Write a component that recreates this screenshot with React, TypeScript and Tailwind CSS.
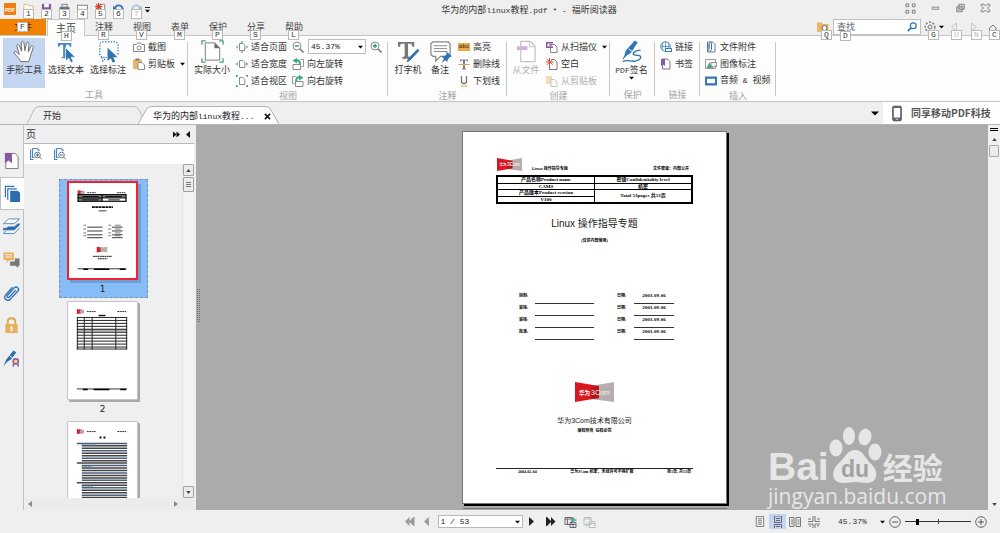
import type { ReactNode } from 'react';

/* ---------- small shared pieces ---------- */

interface IconProps {
  box?: string;
  className?: string;
  children: ReactNode;
}

function Icon({ box = '0 0 12 12', className = 'w-3 h-3', children }: IconProps) {
  return (
    <svg viewBox={box} className={`${className} shrink-0`} fill="none" aria-hidden="true">
      {children}
    </svg>
  );
}

function Caret({ className = 'text-black' }: { className?: string }) {
  return (
    <Icon box="0 0 6 4" className={`w-[5px] h-[4px] ${className}`}>
      <path d="M0 0.500h6L3 3.800z" fill="currentColor" />
    </Icon>
  );
}

function Tip({ label, className, dim }: { label: string; className: string; dim?: boolean }) {
  return (
    <kbd
      className={`absolute z-10 w-[11px] h-[10px] flex items-center justify-center bg-white border border-[#b9b9b9] font-['Liberation_Mono',monospace] text-[8px] leading-none ${dim ? 'text-[#b8b8b8]' : 'text-[#333]'} ${className}`}
    >
      {label}
    </kbd>
  );
}

const latin = "font-['Liberation_Mono',monospace] text-[8px]";

/* ---------- icons ---------- */

const pageShape = 'M2.500 1h5l2.500 2.500V11h-7.500z';

const FitIcon = ({ kind }: { kind: string }) => (
  <Icon>
    <path d="M3.500 2.500h3.500l1.800 1.800v5.200H3.500z" fill="#fff" stroke="#8a8a8a" />
    {kind === 'page' && <path d="M6 0l1.800 1.600H4.200zM6 12l1.800-1.600H4.200zM0 6l1.600-1.800v3.600zM12 6l-1.600-1.800v3.600z" fill="#3da67e" />}
    {kind === 'width' && <path d="M0 6l1.800-2v4zM12 6l-1.800-2v4z" fill="#3da67e" />}
    {kind === 'view' && <path d="M0.500 2V0.500H2M10 0.500h1.500V2M11.500 10v1.500H10M2 11.500H0.500V10" stroke="#3da67e" strokeWidth="1.400" />}
  </Icon>
);

const ZoomIcon = ({ plus }: { plus?: boolean }) => (
  <Icon>
    <circle cx="5" cy="5" r="4" fill="#fff" stroke="#8c8c8c" />
    <path d="M8 8l3.500 3.500" stroke="#7b7b7b" strokeWidth="1.600" />
    <path d={plus ? 'M2.800 5h4.400M5 2.800v4.400' : 'M2.800 5h4.400'} stroke="#2f9c72" strokeWidth="1.400" />
  </Icon>
);

const RotateIcon = ({ right }: { right?: boolean }) => (
  <Icon>
    <g transform={right ? 'matrix(-1 0 0 1 12 0)' : undefined}>
      <path d="M8.500 1.500h3v7h-2" stroke="#9a9a9a" />
      <path d="M1 6.500h7.500v5H1z" fill="#fff" stroke="#8a8a8a" />
      <path d="M8 6.500C8 3 6.500 2 4 2.300" stroke="#3da67e" strokeWidth="2" />
      <path d="M5 0v5.500L0.500 2.500z" fill="#3da67e" />
    </g>
  </Icon>
);

const Cursor = () => <path d="M11 8v14l3.300-3 2.200 4.700 2.600-1.200-2.200-4.500h4.600z" fill="#2e74b5" />;

const HandIcon = () => (
  <Icon box="0 0 24 24" className="w-[23px] h-[23px]">
    <path
      d="M8 22.500c-1-3-4.500-6-6.700-8.800-.7-1.500 1-2.300 2.300-1.200l3 2.700L4 6.500c-.4-1.800 1.800-2.400 2.500-.8l2.500 6L8.600 3c0-1.900 2.500-2 2.800-.2l1 8.400 1.700-8c.5-1.700 2.700-1.300 2.600.5l-.8 8.600 2.800-5.500c.9-1.500 2.800-.6 2.400 1l-3 9c-.6 2.600-1.100 4-1.600 5.700z"
      fill="#fff"
      stroke="#6c6c6c"
    />
  </Icon>
);

const SelectTextIcon = () => (
  <Icon box="0 0 24 24" className="w-[23px] h-[23px]">
    <path d="M3 3h14v4h-1.500L14.500 5h-3v12.500l1.800.8V19H6.700v-.7l1.800-.8V5h-3l-1 2H3z" fill="#4a89c8" />
    <path d="M11 8v14l3.300-3 2.200 4.700 2.600-1.200-2.200-4.500h4.600z" fill="#2e74b5" stroke="#fff" strokeWidth="0.800" />
  </Icon>
);

const SelectMarkIcon = () => (
  <Icon box="0 0 24 24" className="w-[23px] h-[23px]">
    <path d="M8 18H5l-2-2V4l2-2h15l2 2v12M5 18l1 4 4-4" stroke="#2e74b5" strokeDasharray="1.500 1.500" strokeWidth="1.200" />
    <Cursor />
  </Icon>
);

const ActualSizeIcon = () => (
  <Icon box="0 0 24 24" className="w-[23px] h-[23px]">
    <path d="M1 5V1h4M19 1h4v4M23 19v4h-4M5 23H1v-4" stroke="#3da67e" strokeWidth="1.300" />
    <path d="M4.500 3h10l5 5v13h-15z" fill="#fff" stroke="#7a7a7a" />
    <path d="M14 3v5.500h5.500z" fill="#6a6a6a" />
  </Icon>
);

const TypewriterIcon = () => (
  <Icon box="0 0 24 24" className="w-[23px] h-[23px]">
    <path d="M1 2h17v5h-2l-1-3h-3.500v13l2.500 1v1.500H5.500V18L8 17V4H4L3 7H1z" fill="#777" />
    <path d="M23 11l-9.500 10-2.800 1.800 1.200-3.200L21.500 9.700z" fill="#2e74b5" stroke="#2e74b5" />
  </Icon>
);

const NoteIcon = () => (
  <Icon box="0 0 24 24" className="w-[23px] h-[23px]">
    <path d="M4 2h16l2 2v11l-2 2h-8l-5 5v-5H4l-2-2V4z" fill="#fff" stroke="#858585" strokeWidth="1.300" />
    <path d="M5 6h14M5 9h14M5 12h14" stroke="#858585" />
    <path d="M18 12l6 5-2.500 1-2 2.500-.3 2.500-2.200-2-4 3 2.500-4.500-2-2 2.500-.6 2.300-2z" fill="#2e74b5" />
  </Icon>
);

const FromFileIcon = () => (
  <Icon box="0 0 24 24" className="w-[23px] h-[23px]">
    <path d="M6 1.500h10l5 5v16H6z" fill="#fff" stroke="#c4c4c4" strokeWidth="1.300" />
    <path d="M15 1.500v5.500h6" stroke="#c4c4c4" />
    <path d="M2 6.500h11v4H2z" fill="#cdb4dc" />
  </Icon>
);

const SignIcon = () => (
  <Icon box="0 0 24 24" className="w-[23px] h-[23px]">
    <path d="M15.500 0.500l3 1.800-7 11-4.500 3-5 5.200 3-6.500 1-4z" fill="#2e74b5" />
    <path d="M9 9.500l4 2.500" stroke="#fff" />
    <path d="M3 22.500c5-2.500 8 .5 13-.5 7-1.500 7-6 2.500-6-4 0-6-.5-4-3 1.500-1.800 4-2.500 7-2.500" stroke="#2e74b5" strokeWidth="1.400" />
  </Icon>
);

/* ---------- ribbon ---------- */

function BigButton({ icon, label, active, dim, caret, width = 'w-[42px]' }: {
  icon: ReactNode; label: ReactNode; active?: boolean; dim?: boolean; caret?: boolean; width?: string;
}) {
  return (
    <button
      className={`${width} h-[50px] shrink-0 pt-[2px] flex flex-col items-center ${active ? 'bg-[#c3d5f1]' : ''} ${dim ? 'text-[#b0b0b0]' : 'text-[#333]'}`}
    >
      {icon}
      <span className="mt-px h-3 leading-3 whitespace-nowrap">{label}</span>
      {caret && <Caret />}
    </button>
  );
}

function SmallButton({ icon, label, dim, caret }: { icon: ReactNode; label: ReactNode; dim?: boolean; caret?: boolean }) {
  return (
    <button className={`h-[17px] flex items-center gap-[3px] whitespace-nowrap ${dim ? 'text-[#b0b0b0]' : 'text-[#333]'}`}>
      {icon}
      <span>{label}</span>
      {caret && <span className="pl-[2px]"><Caret /></span>}
    </button>
  );
}

function Group({ title, width, children }: { title: string; width: string; children: ReactNode }) {
  return (
    <section className={`${width} shrink-0 relative flex flex-col pt-[2px] after:absolute after:right-0 after:top-[6px] after:h-[54px] after:w-px after:bg-[#c6c6c6]`}>
      <div className="flex h-[51px]">{children}</div>
      <h3 className="text-center text-[#a2a2a2] leading-[13px]">{title}</h3>
    </section>
  );
}

function Ribbon() {
  return (
    <div className="h-[66px] shrink-0 flex bg-[#fdfdfd] border-b border-[#c4c4c4]">
      <Group title="工具" width="w-[188px]">
        <div className="flex pl-[3px]">
          <BigButton icon={<HandIcon />} label="手形工具" active />
          <BigButton icon={<SelectTextIcon />} label="选择文本" />
          <BigButton icon={<SelectMarkIcon />} label="选择标注" />
        </div>
        <div className="pl-1">
          <SmallButton
            icon={
              <Icon>
                <path d="M0.500 3.500h3l1-1.500h3l1 1.500h3v7H0.500z" stroke="#868686" fill="#fff" />
                <circle cx="6" cy="6.800" r="2" stroke="#868686" />
              </Icon>
            }
            label="截图"
          />
          <SmallButton
            icon={
              <Icon>
                <path d="M0 1.500h9V11H0z" fill="#eab665" />
                <path d="M2.500 0.500h4v2h-4z" fill="#7a7a7a" />
                <path d="M5 4.500h4l2.500 2.500v4.500H5z" fill="#fff" stroke="#8a8a8a" />
              </Icon>
            }
            label="剪贴板"
            caret
          />
        </div>
      </Group>

      <Group title="视图" width="w-[200px]">
        <div className="flex pl-[3px]">
          <BigButton icon={<ActualSizeIcon />} label="实际大小" />
        </div>
        <div className="pl-[3px]">
          <SmallButton icon={<FitIcon kind="page" />} label="适合页面" />
          <SmallButton icon={<FitIcon kind="width" />} label="适合宽度" />
          <SmallButton icon={<FitIcon kind="view" />} label="适合视区" />
        </div>
        <div className="pl-[5px]">
          <div className="h-[17px] flex items-center gap-1">
            <button aria-label="缩小"><ZoomIcon /></button>
            <label className="relative flex items-center">
              <select aria-label="缩放" className={`appearance-none w-[58px] h-[15px] pl-[2px] bg-white border border-[#bcbcbc] text-[#222] ${latin}`}>
                <option>45.37%</option>
              </select>
              <span className="absolute right-[3px] pointer-events-none"><Caret /></span>
            </label>
            <button aria-label="放大"><ZoomIcon plus /></button>
          </div>
          <SmallButton icon={<RotateIcon />} label="向左旋转" />
          <SmallButton icon={<RotateIcon right />} label="向右旋转" />
        </div>
      </Group>

      <Group title="注释" width="w-[119px]">
        <div className="flex pl-1">
          <BigButton icon={<TypewriterIcon />} label="打字机" width="w-[32px]" />
          <BigButton icon={<NoteIcon />} label="备注" width="w-[32px]" />
        </div>
        <div className="pl-[2px]">
          <SmallButton icon={<span className="w-3 h-2 bg-[#eba94a] font-['Liberation_Sans',sans-serif] font-bold text-[6px] leading-[7px] text-center text-[#5c4520]">abc</span>} label="高亮" />
          <SmallButton
            icon={
              <Icon>
                <path d="M2 1.500h8v2H9l-.5-1H7v8h1v1H4v-1h1v-8H3.500L3 3.500H2z" fill="#808080" />
                <path d="M0.500 6.500h11" stroke="#e3a046" />
              </Icon>
            }
            label="删除线"
          />
          <SmallButton
            icon={
              <Icon>
                <path d="M3.500 1v5c0 3.500 5 3.500 5 0V1" stroke="#707070" strokeWidth="1.200" />
                <path d="M2.500 11h7" stroke="#e3a046" />
              </Icon>
            }
            label="下划线"
          />
        </div>
      </Group>

      <Group title="创建" width="w-[103px]">
        <div className="flex pl-[2px]">
          <BigButton icon={<FromFileIcon />} label="从文件" dim width="w-[34px]" />
        </div>
        <div className="pl-[3px]">
          <SmallButton
            icon={
              <Icon>
                <path d="M4.500 3.500h4l2.500 2.500v5.500h-6.500z" stroke="#868686" fill="#fff" />
                <path d="M0 1h7v1.500H1.500v3H7V7H0zM3 3.500h3v1H3z" fill="#8956a5" />
              </Icon>
            }
            label="从扫描仪"
            caret
          />
          <SmallButton
            icon={
              <Icon>
                <path d="M5.500 1.500h3l2.500 2.500v7.500h-7.500V8" stroke="#777" />
                <path d="M3.500 0v8M0 4h7.500M1 1.200l5.500 5.500M6.500 1.200L1 6.700" stroke="#dc4a2d" />
              </Icon>
            }
            label="空白"
          />
          <SmallButton
            icon={
              <Icon>
                <path d="M0 1h6v8H0z" fill="#f2dcbb" />
                <path d="M5 4.500h3.500l2.500 2.500v4.500H5z" fill="#fff" stroke="#c3c3c3" />
              </Icon>
            }
            label="从剪贴板"
            dim
          />
        </div>
      </Group>

      <Group title="保护" width="w-[45px]">
        <BigButton icon={<SignIcon />} label={<><span className={latin}>PDF</span>签名</>} caret width="w-[43px]" />
      </Group>

      <Group title="链接" width="w-[45px]">
        <div className="pl-[5px]">
          <SmallButton
            icon={
              <Icon>
                <circle cx="5.500" cy="5.500" r="4.800" stroke="#4a86c5" />
                <path d="M1 5.500h9M5.500 1v9M3 1.500c-1 2.500-1 5.500 0 8M8 1.500c1 2.500 1 5.500 0 8" stroke="#4a86c5" strokeWidth="0.800" />
                <path d="M5.500 7.500h6v3h-6z" fill="#fff" stroke="#2e74b5" />
              </Icon>
            }
            label="链接"
          />
          <SmallButton
            icon={
              <Icon>
                <path d={pageShape} stroke="#777" />
                <path d="M1 1h4v7L3 6.500 1 8z" fill="#8956a5" />
              </Icon>
            }
            label="书签"
          />
        </div>
      </Group>

      <Group title="插入" width="w-[76px]">
        <div className="pl-[5px]">
          <SmallButton
            icon={
              <Icon>
                <path d={pageShape} stroke="#777" />
                <path d="M3 3v5.500c0 2 3.500 2 3.500 0V2.500c0-1.500-2.300-1.500-2.300 0V8" stroke="#2e74b5" />
              </Icon>
            }
            label="文件附件"
          />
          <SmallButton
            icon={
              <Icon>
                <path d="M0.500 1.500h10v9H0.500z" stroke="#9a9a9a" />
                <path d="M1.500 10l3-6 2.500 6z" fill="#3da67e" />
                <path d="M6 4.500h5.500v4H9L7.500 10V8.500H6z" fill="#eee" stroke="#777" strokeWidth="0.800" />
              </Icon>
            }
            label="图像标注"
          />
          <SmallButton
            icon={
              <Icon>
                <path d="M0 1.500h12v9H0z" fill="#3c76b4" />
                <path d="M2 3.800h8v4.400H2z" fill="#fff" />
              </Icon>
            }
            label={<>音频<span className={latin}> &amp; </span>视频</>}
          />
        </div>
      </Group>
    </div>
  );
}

/* ---------- title bar and menu tabs ---------- */

const quickItems: { name: string; icon: ReactNode }[] = [
  { name: '打开', icon: <path d="M1 10.500v-9h4l1 1.500h5v7.500z" fill="#fff" stroke="#e2b364" /> },
  { name: '保存', icon: <><path d="M1 1h10v10H1z" fill="#8956a5" /><path d="M3.500 1h5v3.500h-5zM3 7h6v4H3z" fill="#fff" /></> },
  { name: '打印', icon: <><path d="M3 1.500h6v3H3z" stroke="#777" /><path d="M0.500 4.500h11v4H0.500z" fill="#5c7386" /></> },
  { name: '邮件', icon: <path d="M0.500 2.500h11v7H0.500zM0.500 7h11" fill="#fff" stroke="#777" /> },
  { name: '新建', icon: <><path d="M5.500 1.500h5v10h-7" fill="#fff" stroke="#888" /><path d="M4 0v8M0 4h8M1.200 1.200l5.600 5.600M6.800 1.200L1.200 6.800" stroke="#d8402a" strokeWidth="1.400" /></> },
  { name: '撤销', icon: <><path d="M2 7c1-6 8-6 9 1" stroke="#2e74b5" strokeWidth="2" /><path d="M0 3l5 4H0z" fill="#2e74b5" /></> },
  { name: '重做', icon: <><path d="M10 7C9 1 2 1 1 8" stroke="#a9c1dc" strokeWidth="2" /><path d="M12 3L7 7h5z" fill="#a9c1dc" /></> },
];

function TitleBar() {
  return (
    <header className="h-[19px] shrink-0 flex">
      <div className="w-[153px] flex items-start pt-[3px]">
        <div className="w-3 h-3 ml-1 mr-[3px] bg-[#f07f13] rounded-[1px] text-white font-['Liberation_Sans',sans-serif] font-bold text-[5px] leading-[14px] text-center">PDF</div>
        {quickItems.map((item, i) => (
          <button key={item.name} aria-label={item.name} className="relative w-[18px] h-4 flex justify-center">
            <Icon className="w-[11px] h-[11px]">{item.icon}</Icon>
            <Tip label={String(i + 1)} dim={i === 6} className="left-1 top-[6px]" />
          </button>
        ))}
        <button aria-label="自定义" className="pt-1 text-[#222]">
          <span className="block w-[5px] h-px bg-[#222] mb-px" />
          <Caret />
        </button>
      </div>
      <h1 className="flex-1 text-center leading-[19px] text-[#333] whitespace-nowrap">
        华为的内部<span className={latin}>linux</span>教程<span className={latin}>.pdf * - </span>福昕阅读器
      </h1>
      <div className="w-[95px] flex items-start pt-[3px] gap-[14px] text-[#777]">
        <button aria-label="布局">
          <Icon className="w-[11px] h-[11px]">
            <path d="M1 1h3v3H1zM8 1h3v3H8zM1 8h3v3H1zM8 8h3v3H8z" stroke="#777" />
          </Icon>
        </button>
        <button aria-label="最小化"><Icon className="w-[11px] h-[10px]"><path d="M2 5h8v2.500H2z" stroke="#777" /></Icon></button>
        <button aria-label="还原"><Icon className="w-[11px] h-[10px]"><path d="M4 1.500h6.500v6H4zM1.500 4.500H8v6H1.500z" fill="#ccc" stroke="#777" /></Icon></button>
        <button aria-label="关闭"><Icon className="w-[11px] h-[10px]"><path d="M1 1.500h3l2 2 2-2h3v2L8.500 6 11 8.500v2H8l-2-2-2 2H1v-2L3.500 6 1 3.500z" stroke="#666" /></Icon></button>
      </div>
    </header>
  );
}

const menuTabs = [
  { name: '主页', tip: 'H' },
  { name: '注释', tip: 'R' },
  { name: '视图', tip: 'V' },
  { name: '表单', tip: 'M' },
  { name: '保护', tip: 'P' },
  { name: '分享', tip: 'S' },
  { name: '帮助', tip: 'L' },
];

function MenuTabs() {
  return (
    <nav className="h-[17px] shrink-0 flex border-b border-[#c4c4c4]">
      <button className="relative w-[46px] h-4 bg-[#f28100] text-[9px] leading-4 text-[#5a2f00]">
        文件
        <Tip label="F" className="left-[17px] top-[3px]" />
      </button>
      {menuTabs.map((tab, i) => (
        <button
          key={tab.name}
          className={`relative w-[38px] leading-4 text-[#444] ${i === 0 ? 'h-[17px] ml-px bg-[#fdfdfd] border-x border-t border-[#c9c9c9] text-[10px] text-[#222]' : 'h-4'}`}
        >
          {tab.name}
          <Tip label={tab.tip} className="left-[13px] top-[11px]" />
        </button>
      ))}
      <div className="flex-1" />
      <div className="flex items-center">
        <button aria-label="查找文件夹" className="relative mr-1">
          <Icon>
            <path d="M0 1.500h4.500L6 3h5.500v8H0z" fill="#eab665" />
            <circle cx="7.500" cy="7" r="2.500" fill="#fff" stroke="#666" />
            <path d="M9.500 9l2 2" stroke="#666" />
          </Icon>
          <Tip label="Q" className="left-1 top-[9px]" />
        </button>
        <label className="relative w-[88px] h-4 flex items-center bg-white border border-[#c0c0c0] px-[3px]">
          <input aria-label="查找" placeholder="查找" className="w-full min-w-0 text-[9px] leading-3 outline-none placeholder:text-[#666]" />
          <Icon className="w-[10px] h-[10px]">
            <circle cx="7.500" cy="4.500" r="3.500" stroke="#2e74b5" strokeWidth="1.500" />
            <path d="M5 7L1 11" stroke="#2e74b5" strokeWidth="2" />
          </Icon>
          <Tip label="D" className="left-[6px] top-[11px]" />
        </label>
        <button aria-label="设置" className="relative ml-[3px] flex items-center gap-[3px]">
          <Icon>
            <circle cx="6" cy="6" r="4.800" stroke="#777" strokeWidth="1.400" strokeDasharray="2 1.500" />
            <circle cx="6" cy="6" r="2" stroke="#777" />
          </Icon>
          <Caret />
          <Tip label="G" className="left-1 top-[9px]" />
        </button>
        <button aria-label="上一个" className="relative ml-[5px] w-[14px]">
          <Icon><path d="M7.500 2v8L2.500 6z" stroke="#c4c4c4" /></Icon>
          <Tip label="U" dim className="left-[2px] top-[9px]" />
        </button>
        <button aria-label="下一个" className="relative ml-[6px] w-[14px]">
          <Icon><path d="M2.500 2v8l5-4z" stroke="#c4c4c4" /></Icon>
          <Tip label="N" dim className="left-[2px] top-[9px]" />
        </button>
        <button aria-label="收起功能区" className="relative ml-1 mr-px">
          <Icon><path d="M2.500 10h6.500V7L6 4 2.500 7z" stroke="#777" /></Icon>
          <Tip label="C" className="left-[2px] top-[9px]" />
        </button>
      </div>
    </nav>
  );
}

/* ---------- document tabs ---------- */

function DocTab({ active, width, children }: { active?: boolean; width: string; children: ReactNode }) {
  return (
    <div className={`relative h-[18px] shrink-0 flex items-center ${width}`}>
      <svg viewBox="0 0 140 18" preserveAspectRatio="none" className="absolute inset-0 w-full h-full" aria-hidden="true">
        <path d="M0 18L8 4Q10 0.500 14 0.500H126Q130 0.500 132 4L140 18" fill={active ? '#fdfdfd' : '#efefef'} stroke="#b5b5b5" />
      </svg>
      <div className="relative flex-1 flex items-center justify-between">{children}</div>
    </div>
  );
}

function DocTabs() {
  return (
    <div className="h-[23px] shrink-0 flex items-end border-b border-[#b5b5b5]">
      <div className="flex flex-1 pl-[27px]">
        <DocTab width="w-[119px]">
          <button className="pl-4 pt-[2px] text-[#333]">开始</button>
        </DocTab>
        <DocTab active width="w-[141px] -ml-2">
          <button className="pl-[15px] pt-[2px] text-[#222] whitespace-nowrap">
            华为的内部<span className={latin}>linux</span>教程<span className={latin}>...</span>
          </button>
          <button aria-label="关闭标签" className="mr-2 pt-[2px]">
            <Icon className="w-[7px] h-[7px]"><path d="M1.500 1.500l9 9M10.500 1.500l-9 9" stroke="#111" strokeWidth="2.500" /></Icon>
          </button>
        </DocTab>
      </div>
      <button aria-label="标签列表" className="h-full flex items-center pr-1">
        <Icon box="0 0 8 5" className="w-[8px] h-[5px]"><path d="M0 0.500h8L4 4.500z" fill="#000" /></Icon>
      </button>
      <a href="#mobile" className="h-[22px] w-[117px] bg-white flex items-center pl-[9px] gap-[9px] text-[10px] font-bold text-[#555] whitespace-nowrap">
        <Icon box="0 0 10 16" className="w-[10px] h-[17px]">
          <rect x="0.700" y="0.700" width="8.600" height="14.600" rx="1.200" fill="#666" stroke="#555" />
          <path d="M1.800 2.500h6.400v9.500H1.800z" fill="#fff" />
          <circle cx="5" cy="13.800" r="0.700" fill="#fff" />
        </Icon>
        同享移动PDF科技
      </a>
    </div>
  );
}

/* ---------- left side ---------- */

const sideIcons: { name: string; icon: ReactNode }[] = [
  { name: '书签', icon: <><path d="M3 1.500h10l3 3.500v12.500H3z" fill="#fff" stroke="#777" /><path d="M2 1h7.500v11l-3.700-3L2 12z" fill="#8956a5" /></> },
  { name: '页面', icon: <><path d="M1.500 13V1.500H11M4 15.500V4h9.500" stroke="#2e74b5" strokeWidth="1.300" /><path d="M6.500 6h8l2.500 2.500V18H6.500z" fill="#2e6cb0" /></> },
  { name: '图层', icon: <><path d="M6 1h11.500l-5.500 5H0.500z" fill="#fff" stroke="#4a89c8" /><path d="M0.500 11h3l2-1.500H12l3.500-3h2.500L12 12.500H0z" fill="#2e6cb0" stroke="#2e6cb0" /><path d="M3 13.500L0.500 16.500h11.500l5.500-6" stroke="#4a89c8" /></> },
  { name: '注释', icon: <><path d="M0.500 1.500h11v8H7L4 12.500v-3H0.500z" fill="#e8b05c" /><path d="M2.500 4h7M2.500 6.500h7" stroke="#fff" /><path d="M12.500 8h5v7.500H16v2.500L13.500 15.500h-6v-4.500h5z" fill="#777" /></> },
  { name: '附件', icon: <path d="M13.500 6.500l-6.500 7c-1.500 1.500-3.500 0-2.200-1.700l7-7.500c2.500-2.500 6 .5 4 3.200l-8 8.500c-3.500 3.300-7.800-.8-5-4.500L10 3.500" stroke="#2e74b5" strokeWidth="1.500" /> },
  { name: '安全', icon: <><path d="M5 8V5c0-5 8-5 8 0v3" stroke="#e0a850" strokeWidth="2" /><path d="M2.500 7.500h13V17h-13z" fill="#e8b05c" /><path d="M8 10h2v5H8z" fill="#fff" /></> },
  { name: '签名', icon: <><path d="M11 0.500l3 2-5.500 7.500-4 2.500L0.500 17l3-7 4-5z" fill="#2e6cb0" /><path d="M7 6l3 2.500" stroke="#fff" /><circle cx="13.500" cy="12" r="2.800" fill="#f5d36c" stroke="#8956a5" strokeWidth="1.500" /><path d="M11.500 14.500l-1 3M15.500 14.500l1 3" stroke="#8956a5" strokeWidth="1.600" /></> },
];

function SideNav() {
  return (
    <nav className="w-6 shrink-0 pt-[19px] flex flex-col border-r border-[#c2c2c2]">
      {sideIcons.map((item, i) => (
        <button
          key={item.name}
          aria-label={item.name}
          className={`h-[33px] flex items-center justify-center ${i === 1 ? 'w-6 bg-white border-y border-l border-[#c2c2c2]' : 'w-[23px]'}`}
        >
          <Icon box="0 0 18 18" className="w-[17px] h-[17px]">{item.icon}</Icon>
        </button>
      ))}
    </nav>
  );
}

const tocLines = Array.from({ length: 24 }, (_, i) => i);

// Reduced drawings of the document's pages; 70 x 98 units each.
function MiniPage({ page }: { page: number }) {
  return (
    <svg viewBox="0 0 70 98" className="w-full h-full" aria-hidden="true">
      <path d="M9 7l7 1v3l-7 1z" fill="#d8202a" />
      <path d="M12 8.500l4-1v4l-4-1z" fill="#b9b0ae" />
      <path d="M19 9.500h9M50 9.500h9" stroke="#333" strokeDasharray="2 0.500" />
      {page === 1 && (
        <>
          <path d="M9 11h51v8H9z" fill="#777" />
          <path d="M35 15h24v3H35z" fill="#fff" />
          <path d="M9 11.500h51M9 15h51M9 18.500h51M9.500 11v8M34.500 11v8M59.500 11v8" stroke="#000" />
          <path d="M14 13.500h17M38 13.500h17M14 17h17M41 17h12" stroke="#111" />
          <path d="M24 24.500h22" stroke="#111" strokeWidth="1.800" strokeDasharray="3 0.500" />
          <path d="M31 28.500h8" stroke="#333" />
          <path d="M19 45.500h16M19 49.500h16M19 53.500h16M19 56.500h16M45 45.500h11M45 49.500h11M45 53.500h11M45 56.500h11" stroke="#333" />
          <path d="M15 43.500h3M15 47.500h3M15 51.500h3M15 54.500h3M41 43.500h3M41 47.500h3M41 51.500h3M41 54.500h3M48 43.500h6M48 47.500h6M48 51.500h6M48 54.500h6" stroke="#777" />
          <path d="M29 66l6 1v4l-6 1z" fill="#d8202a" />
          <path d="M33 67l7-1v6l-7-1z" fill="#b9b0ae" />
          <path d="M25 76h20M30 78.500h10" stroke="#111" strokeDasharray="2 0.400" />
          <path d="M9 89h51" stroke="#333" />
          <path d="M15 89.500h5M26 89.500h16M53 89.500h6" stroke="#000" strokeWidth="1.500" />
        </>
      )}
      {page === 2 && (
        <>
          <path d="M31 13.500h7" stroke="#111" strokeWidth="1.400" />
          <path d="M10 27h50v3H10z" fill="#b5b5b5" />
          <path d="M9 15.500h51M9 18.500h51M9 21.500h51M9 24.500h51M9 27.500h51M9 30.500h51M9 33.500h51M9 36.500h51M9 39.500h51M9 42.500h51M9 45.500h51M9.500 15v33M16.500 15v33M24.500 15v33M48.500 15v33M59.500 15v33M9 47.500h51" stroke="#222" />
          <path d="M9 88h51" stroke="#333" />
          <path d="M15 88.500h5M26 88.500h16M53 88.500h6" stroke="#000" strokeWidth="1.500" />
        </>
      )}
      {page === 3 && (
        <>
          <path d="M32 15.500h2M36 15.500h2" stroke="#111" strokeWidth="2" />
          {tocLines.map((i) => (
            <path key={i} d={`M${i % 8 === 0 ? 9 : 14} ${21.5 + i * 2.5}h${i % 8 === 0 ? 51 : 46}`} stroke={i % 3 === 0 ? '#4a5e7e' : '#444'} strokeWidth="1.500" />
          ))}
          <path d="M14 23h14M14 45h10M14 65h12" stroke="#5a86c0" strokeDasharray="2 1" />
        </>
      )}
    </svg>
  );
}

function Thumb({ page, selected, labelled = true }: { page: number; selected?: boolean; labelled?: boolean }) {
  return (
    <button
      aria-label={`第${page}页`}
      className={`w-[89px] h-[119px] mb-px shrink-0 pt-px pr-px flex flex-col items-center border ${selected ? 'bg-[#86bdf8] border-dashed border-[#7a93ad]' : 'border-transparent'}`}
    >
      <span
        className={`block w-[71px] h-[99px] bg-white ${selected ? 'border-2 border-[#f3222b] shadow-[3px_3px_0_#6a9fd8]' : 'border border-[#c4c4c4] rounded-[1px] shadow-[2px_2px_0_#a8a8a8]'}`}
      >
        <MiniPage page={page} />
      </span>
      {labelled && <span className="mt-[2px] font-['DejaVu_Sans',sans-serif] text-[9px] leading-[14px] text-[#222]">{page}</span>}
    </button>
  );
}

function PagesPanel() {
  return (
    <aside className="w-[172px] shrink-0 flex flex-col bg-[#efefef] pr-[2px]">
      <div className="h-[19px] shrink-0 flex items-center justify-between pl-[2px] pr-1 border-b border-[#b8b8b8]">
        <h2 className="text-[10px] text-[#333]">页</h2>
        <div className="flex items-center gap-[6px]">
          <button aria-label="展开">
            <Icon box="0 0 8 7" className="w-[7px] h-[7px]"><path d="M0 0l4 3.500L0 7zM4 0l4 3.500L4 7z" fill="#111" /></Icon>
          </button>
          <button aria-label="收起">
            <Icon box="0 0 4 7" className="w-[4px] h-[7px]"><path d="M4 0v7L0 3.500z" fill="#111" /></Icon>
          </button>
        </div>
      </div>
      <div className="h-5 shrink-0 flex items-center gap-3 pl-[6px] bg-white">
        {['放大缩略图', '缩小缩略图'].map((name, i) => (
          <button key={name} aria-label={name}>
            <Icon>
              <path d="M0.500 1.500v10h3M2.500 0.500h4.500l2.500 2.500M2.500 0.500v9h2" stroke="#4a86c5" strokeWidth="1.200" />
              <circle cx="7.500" cy="7" r="2.800" fill="#fff" stroke="#777" />
              <path d={i === 0 ? 'M6 7h3M7.500 5.500v3' : 'M6 7h3'} stroke="#2e74b5" />
              <path d="M9.500 9l2.500 2.500" stroke="#777" />
            </Icon>
          </button>
        ))}
      </div>
      <div className="flex-1 min-h-0 flex">
        <div className="flex-1 overflow-hidden flex flex-col items-center pt-[15px] border-r border-[#e6e6e6]">
          <Thumb page={1} selected />
          <Thumb page={2} />
          <Thumb page={3} labelled={false} />
        </div>
        <div className="w-[11px] flex flex-col bg-[#f3f3f3]">
          <ScrollButton dir="up" boxed />
          <div className="h-[15px] mt-px bg-[#ececec] border border-[#9d9d9d] rounded-[1px] flex flex-col items-center justify-center gap-px">
            <span className="w-[5px] h-px bg-[#777]" />
            <span className="w-[5px] h-px bg-[#777]" />
            <span className="w-[5px] h-px bg-[#777]" />
          </div>
          <div className="flex-1" />
          <ScrollButton dir="down" boxed />
        </div>
      </div>
      <div className="h-3 shrink-0 flex items-center justify-between pl-1 pr-4 bg-[#ececec]">
        <button aria-label="向左滚动"><Icon box="0 0 4 6" className="w-[4px] h-[6px]"><path d="M4 0v6L0 3z" fill="#8a8a8a" /></Icon></button>
        <button aria-label="向右滚动"><Icon box="0 0 4 6" className="w-[4px] h-[6px]"><path d="M0 0v6l4-3z" fill="#8a8a8a" /></Icon></button>
      </div>
    </aside>
  );
}

function ScrollButton({ dir, boxed }: { dir: 'up' | 'down'; boxed?: boolean }) {
  return (
    <button
      aria-label={dir === 'up' ? '向上滚动' : '向下滚动'}
      className={`h-3 flex items-center justify-center ${boxed ? 'bg-[#ebebeb] border border-[#a3a3a3] rounded-[1px]' : ''}`}
    >
      <Icon box="0 0 6 4" className="w-[5px] h-[3px]"><path d={dir === 'up' ? 'M0 4h6L3 0z' : 'M0 0h6L3 4z'} fill="#444" /></Icon>
    </button>
  );
}

/* ---------- document page ---------- */

function Logo({ className }: { className: string }) {
  return (
    <svg viewBox="0 0 39 20" className={`${className} shrink-0`} role="img" aria-label="华为3Com">
      <path d="M39 0L16 4v13l23 3z" fill="#b6aeac" />
      <path d="M0 0l24 4v12L0 20z" fill="#da1720" />
      <path d="M16 6l8-2v12l-8 1z" fill="#b3141c" />
      <text x="4" y="12.500" fontSize="5.500" fontWeight="bold" fill="#fff" fontFamily="Noto Sans CJK SC, sans-serif">华为</text>
      <text x="16" y="12.500" fontSize="7" fill="#f5eeee" fontFamily="Liberation Sans, sans-serif">3Com</text>
    </svg>
  );
}

const signRows = [
  { label: '拟制:', date: '2003-09-06' },
  { label: '审核:', date: '2003-09-06' },
  { label: '审核:', date: '2003-09-06' },
  { label: '批准:', date: '2003-09-06' },
];

function DocumentPage() {
  return (
    <article className="w-[265px] h-[373px] shrink-0 px-[33px] flex flex-col bg-white border border-[#777] shadow-[2px_2px_0_#000] text-black font-['Liberation_Serif','Noto_Sans_CJK_SC',serif]">
      <div className="mt-[26px] flex items-end text-[4px] leading-[4px] font-bold whitespace-nowrap">
        <Logo className="w-[25px] h-[13px] ml-px" />
        <span className="ml-[10px] font-['Liberation_Sans','Noto_Sans_CJK_SC',sans-serif]">Linux 操作指导专题</span>
        <span className="ml-auto mr-1">文件密级：内部公开</span>
      </div>
      <table className="mt-[4px] w-full border-collapse border-2 border-black text-center text-[5px] leading-[5px] font-bold">
        <tbody>
          <tr className="h-[7px]">
            <td className="w-1/2 border border-black p-0">产品名称Product name</td>
            <td className="border border-black p-0">密级Confidentiality level</td>
          </tr>
          <tr className="h-[6px]">
            <td className="border border-black p-0">CAMS</td>
            <td className="border border-black p-0">机密</td>
          </tr>
          <tr className="h-[7px]">
            <td className="border border-black p-0">产品版本Product version</td>
            <td rowSpan={2} className="border border-black p-0">Total 53pages 共53页</td>
          </tr>
          <tr className="h-[6px]">
            <td className="border border-black p-0">V100</td>
          </tr>
        </tbody>
      </table>
      <h2 className="mt-[12px] text-center text-[10px] leading-4 text-[#222] font-['Liberation_Sans','Noto_Sans_CJK_SC',sans-serif]">Linux 操作指导专题</h2>
      <p className="mt-[6px] text-center text-[4px] leading-[6px] font-bold">(仅供内部使用)</p>

      <div className="mt-[49px] pl-[23px]">
        {signRows.map((row, i) => (
          <div key={i} className="h-3 flex items-start text-[4px] leading-[6px] font-bold whitespace-nowrap">
            <span className="w-[16px]">{row.label}</span>
            <span className="w-[59px] h-[11px] border-b border-[#333]" />
            <span className="w-[17px] ml-[23px]">日期:</span>
            <span className="w-[40px] h-[11px] border-b border-[#333] text-center text-[5px]">{row.date}</span>
          </div>
        ))}
      </div>

      <Logo className="mt-[41px] self-center w-[39px] h-[20px]" />
      <p className="mt-[14px] text-center text-[7px] leading-[10px] text-[#222] font-['Liberation_Sans','Noto_Sans_CJK_SC',sans-serif]">华为3Com技术有限公司</p>
      <p className="mt-[2px] text-center text-[4px] leading-[6px] font-bold">版权所有&nbsp; 侵权必究</p>

      <footer className="mt-auto mb-[28px] border-t border-[#222] flex justify-between pl-[22px] pr-[2px] text-[4px] leading-[6px] font-bold whitespace-nowrap">
        <span>2004-02-04</span>
        <span>华为3Com 机密，未经许可不得扩散</span>
        <span>第1页, 共53页</span>
      </footer>
    </article>
  );
}

function Watermark() {
  return (
    <div className="absolute right-[43px] bottom-0 w-[177px] text-[#e6e6e6] pointer-events-none">
      <div className="flex items-end font-bold">
        <span className="font-['Liberation_Sans',sans-serif] text-[39px] leading-[40px] -mb-[4px]">Bai</span>
        <svg viewBox="0 0 54 56" className="w-[54px] h-[56px] shrink-0" aria-hidden="true">
          <ellipse cx="7" cy="21" rx="6.500" ry="8.500" fill="currentColor" />
          <ellipse cx="20" cy="9" rx="6" ry="9" fill="currentColor" />
          <ellipse cx="36" cy="10" rx="6.500" ry="8.500" transform="rotate(12 36 10)" fill="currentColor" />
          <ellipse cx="46" cy="25" rx="6.500" ry="8.500" fill="currentColor" />
          <path d="M26 23c8 0 10 8 16 14 9 8 6 19-4 19-5 0-7-1-12-1s-7 1-12 1c-11 0-13-11-5-19 7-6 9-14 17-14z" fill="currentColor" />
          <text x="26" y="50" textAnchor="middle" fontSize="23" fontFamily="Liberation Sans, sans-serif" fontWeight="bold" fill="#a2a2a2">du</text>
        </svg>
        <span className="mb-[2px] text-[30px] leading-[30px] whitespace-nowrap">经验</span>
      </div>
      <div className="font-['Open_Sans',sans-serif] text-[21px] leading-[27px] whitespace-nowrap">jingyan.baidu.com</div>
    </div>
  );
}

function DocumentView() {
  return (
    <main className="relative flex-1 min-w-0 overflow-hidden bg-[#ababab] flex">
      <div className="w-[5px] shrink-0 flex items-center justify-center pb-[25px]">
        <span className="w-[3px] h-[33px] border-x border-dotted border-[#6f6f6f]" />
      </div>
      <div className="flex-1 flex flex-col items-center pt-[6px]">
        <DocumentPage />
        <span className="w-[264px] h-px mt-1 bg-[#777]" />
      </div>
      <Watermark />
    </main>
  );
}

/* ---------- status bar ---------- */

function StatusBar() {
  return (
    <footer className="h-[23px] shrink-0 grid grid-cols-[1fr_auto_1fr] items-center bg-[#efefef]">
      <div />
      <div className="flex items-center">
        <button aria-label="第一页"><Icon box="0 0 10 9" className="w-[10px] h-[9px]"><path d="M4.500 0v9L0 4.500zM8.500 0v9L4 4.500zM8.500 0h1v9h-1z" fill="#9a9a9a" /></Icon></button>
        <button aria-label="上一页" className="ml-[9px]"><Icon box="0 0 5 9" className="w-[5px] h-[9px]"><path d="M5 0v9L0 4.500z" fill="#9a9a9a" /></Icon></button>
        <label className="relative ml-[9px] flex items-center">
          <select aria-label="页码" className={`appearance-none w-[85px] h-[13px] pl-[2px] bg-white border border-[#b8b8b8] text-[#222] leading-none ${latin}`}>
            <option>1 / 53</option>
          </select>
          <span className="absolute right-[3px] pointer-events-none"><Caret /></span>
        </label>
        <button aria-label="下一页" className="ml-[6px]"><Icon box="0 0 5 9" className="w-[5px] h-[9px]"><path d="M0 0v9l5-4.500z" fill="#222" /></Icon></button>
        <button aria-label="最后一页" className="ml-[12px]"><Icon box="0 0 10 9" className="w-[10px] h-[9px]"><path d="M0 0h1v9H0zM1 0v9l4.500-4.500zM5 0v9l4.500-4.500z" fill="#222" /></Icon></button>
        <button aria-label="上一视图" className="ml-2">
          <Icon className="w-[13px] h-3">
            <path d="M0.500 1.500h7v7h-7zM0.500 3h7M3 3v5M5.500 6.500h6v5h-6zM5.500 8.500h6M8.500 8v3" stroke="#667" />
            <path d="M12 4H8M9.500 1.500L7 4l2.500 2.500" stroke="#3da67e" strokeWidth="1.400" />
          </Icon>
        </button>
        <button aria-label="下一视图" className="ml-[6px]">
          <Icon className="w-[13px] h-3">
            <path d="M0.500 1.500h7v7h-7zM0.500 3h7M5.500 5.500h6v6h-6zM5.500 7.500h6" stroke="#b9bfc4" />
            <path d="M0 9h4M2.500 7l2 2-2 2" stroke="#a9d8c5" />
          </Icon>
        </button>
      </div>
      <div className="flex items-center justify-end pr-[13px]">
        <button aria-label="单页" className="w-4 flex justify-center">
          <Icon className="w-[11px] h-[11px]"><path d="M2.500 0.500h8v11h-8zM4.500 3h4M4.500 5h4M4.500 7h4M4.500 9h4" stroke="#777" /></Icon>
        </button>
        <button aria-label="连续" className="ml-[2px] w-[17px] h-[15px] flex items-center justify-center bg-[#c3d5f1]">
          <Icon><path d="M2.500 0v6.500h7V0zM2.500 12V8.500h7V12M4 2.500h4M4 4.500h4M4 10.500h4" stroke="#667" /></Icon>
        </button>
        <button aria-label="对开" className="ml-[3px]">
          <Icon className="w-[12px] h-[12px]"><path d="M0.500 1.500h4.500v9H0.500zM7 1.500h4.500v9H7zM2 4h2M2 6h2M2 8h2M8.500 4h2M8.500 6h2M8.500 8h2" stroke="#777" /></Icon>
        </button>
        <button aria-label="连续对开" className="ml-[7px]">
          <Icon><path d="M0 5.500h5V0M7 0v5.500h5M0 8h5v4M7 12V8h5M0 3h3M9 3h3M1 10h2M9 10h2" stroke="#777" /></Icon>
        </button>
        <label className="relative ml-[18px] flex items-center">
          <select aria-label="缩放比例" className={`appearance-none w-[48px] text-[#333] ${latin}`}>
            <option>45.37%</option>
          </select>
          <span className="absolute right-px pointer-events-none"><Caret /></span>
        </label>
        <button aria-label="缩小" className="ml-[3px]">
          <Icon><circle cx="6" cy="6" r="5.300" stroke="#666" /><path d="M3 6h6" stroke="#555" /></Icon>
        </button>
        <span className="relative mx-1 flex items-center">
          <input
            type="range"
            aria-label="缩放"
            min={0}
            max={100}
            defaultValue={18}
            className="appearance-none w-[66px] h-px bg-[#333] [&::-webkit-slider-thumb]:appearance-none [&::-webkit-slider-thumb]:w-[3px] [&::-webkit-slider-thumb]:h-[6px] [&::-webkit-slider-thumb]:bg-black"
          />
          <span className="absolute left-1/2 w-px h-[5px] bg-[#444]" />
        </span>
        <button aria-label="放大">
          <Icon><circle cx="6" cy="6" r="5.300" stroke="#666" /><path d="M3 6h6M6 3v6" stroke="#555" /></Icon>
        </button>
      </div>
    </footer>
  );
}

export default function App() {
  return (
    <div className="h-screen flex flex-col overflow-hidden bg-[#efefef] text-[9px] leading-3 font-['Noto_Sans_CJK_SC',sans-serif]">
      <TitleBar />
      <MenuTabs />
      <Ribbon />
      <DocTabs />
      <div className="flex-1 min-h-0 flex">
        <SideNav />
        <PagesPanel />
        <DocumentView />
        <div className="w-3 shrink-0 flex flex-col bg-[#f1f1f1]">
          <div className="h-2 flex flex-col items-center justify-center gap-px">
            <span className="w-2 h-px bg-black" />
            <span className="w-2 h-px bg-black" />
          </div>
          <ScrollButton dir="up" />
          <div className="mx-px h-3 bg-[#ececec] border border-[#a8a8a8] rounded-[1px]" />
          <div className="flex-1" />
          <ScrollButton dir="down" />
        </div>
      </div>
      <StatusBar />
    </div>
  );
}
